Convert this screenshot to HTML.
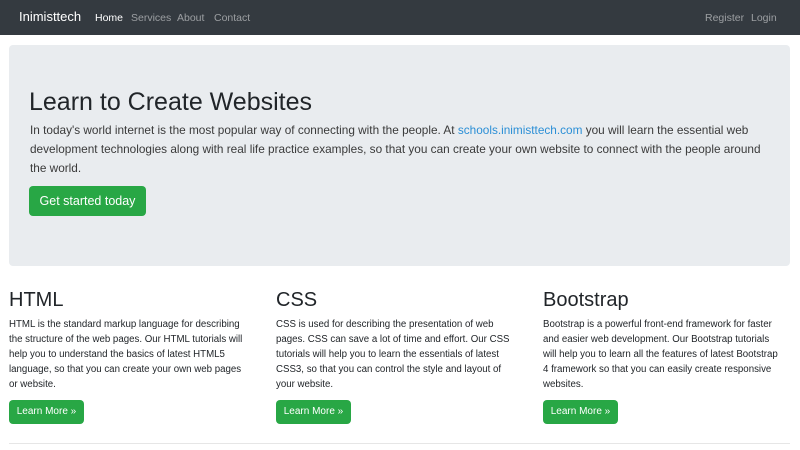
<!DOCTYPE html>
<html><head><meta charset="utf-8"><style>
*{margin:0;padding:0;box-sizing:border-box}
body{width:800px;height:450px;overflow:hidden;background:#fff;font-family:"Liberation Sans",sans-serif;color:#212529}
.nav{height:35px;background:#343a40;position:relative;font-size:10.5px;color:rgba(255,255,255,.5)}
.nav span{position:absolute;top:12px}
.brand{left:19px;top:9px!important;font-size:13px;color:#fff}
.jumbo{position:absolute;left:9px;top:45px;width:781px;height:221px;background:#e9ecef;border-radius:4px}
h1{position:absolute;left:29px;top:88px;font-weight:300;font-size:25px;white-space:nowrap}
.lead{position:absolute;left:30px;top:121px;font-size:11.8px;line-height:19px;font-weight:300;white-space:nowrap;color:#3a3a3a}
.lead a{color:#2b8fd6;text-decoration:none}
.btn{position:absolute;background:#28a745;color:#fff;border-radius:4px;text-align:center}
.b1{left:29px;top:186px;width:117px;height:30px;line-height:30px;font-size:12.5px}
.col{position:absolute;top:287px;width:260px}
.col h2{font-weight:400;font-size:20px;height:30px;line-height:26px}
.col p{font-size:9.7px;line-height:15px;white-space:nowrap;margin-top:0}
.col .btn{position:absolute;left:0;top:113px;width:75px;height:24px;line-height:24px;font-size:10px}
.hr{position:absolute;left:9px;top:443px;width:781px;height:1px;background:#e6e6e6}
</style></head><body>
<div class="nav">
<span class="brand">Inimisttech</span>
<span style="left:95px;color:#fff">Home</span>
<span style="left:131px">Services</span>
<span style="left:177px">About</span>
<span style="left:214px">Contact</span>
<span style="left:705px">Register</span>
<span style="left:751px">Login</span>
</div>
<div class="jumbo"></div>
<h1>Learn to Create Websites</h1>
<div class="lead">In today's world internet is the most popular way of connecting with the people. At <a>schools.inimisttech.com</a> you will learn the essential web<br>development technologies along with real life practice examples, so that you can create your own website to connect with the people around<br>the world.</div>
<div class="btn b1">Get started today</div>
<div class="col" style="left:9px"><h2>HTML</h2><p>HTML is the standard markup language for describing<br>the structure of the web pages. Our HTML tutorials will<br>help you to understand the basics of latest HTML5<br>language, so that you can create your own web pages<br>or website.</p><div class="btn">Learn More »</div></div>
<div class="col" style="left:276px"><h2>CSS</h2><p>CSS is used for describing the presentation of web<br>pages. CSS can save a lot of time and effort. Our CSS<br>tutorials will help you to learn the essentials of latest<br>CSS3, so that you can control the style and layout of<br>your website.</p><div class="btn">Learn More »</div></div>
<div class="col" style="left:543px"><h2>Bootstrap</h2><p>Bootstrap is a powerful front-end framework for faster<br>and easier web development. Our Bootstrap tutorials<br>will help you to learn all the features of latest Bootstrap<br>4 framework so that you can easily create responsive<br>websites.</p><div class="btn">Learn More »</div></div>
<div class="hr"></div>
</body></html>
